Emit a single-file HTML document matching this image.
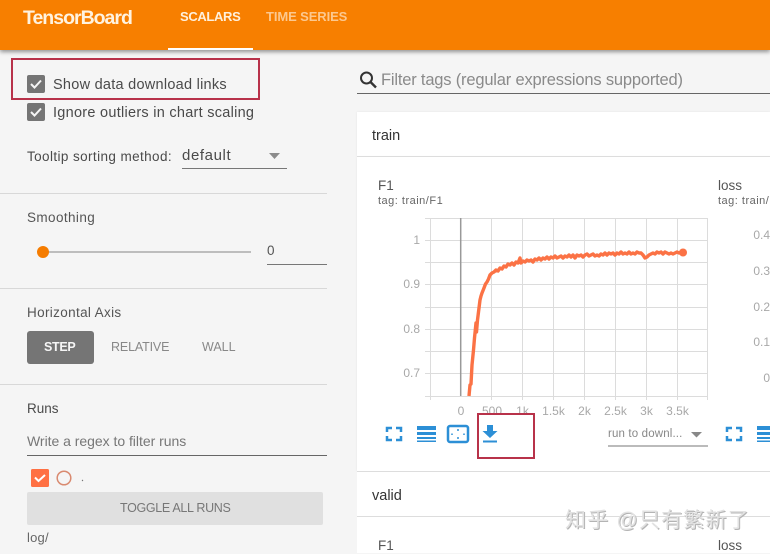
<!DOCTYPE html>
<html><head><meta charset="utf-8">
<style>
html,body{margin:0;padding:0}
body{width:770px;height:553px;overflow:hidden;background:#f5f5f5;position:relative;font-family:"Liberation Sans","Noto Sans CJK SC",sans-serif;color:#555}
.a{position:absolute;white-space:nowrap}
.l{position:absolute}
</style></head><body>
<div class="l" style="left:0;top:0;width:770px;height:50px;background:#f77f00;box-shadow:0 2px 4px rgba(0,0,0,.4)"></div>
<div class="a" style="left:23px;top:6px;font-size:19.500px;line-height:24px;font-weight:bold;color:#fff3e0;letter-spacing:-1px">TensorBoard</div>
<div class="a" style="left:180px;top:9px;font-size:13px;line-height:16px;font-weight:bold;color:#fff0dc;letter-spacing:-.35px">SCALARS</div>
<div class="a" style="left:266px;top:9px;font-size:13px;line-height:16px;font-weight:bold;color:#fcc88f;letter-spacing:-.1px">TIME SERIES</div>
<div class="l" style="left:168px;top:48px;width:85px;height:2px;background:#fff"></div>

<svg class="l" style="left:27px;top:74px" width="19" height="48" viewBox="0 0 19 48">
<rect width="18" height="18" y="1" rx="2" fill="#757575"/><path d="M4 10l3.500 3.500L14 6.500" fill="none" stroke="#f5f5f5" stroke-width="2"/>
<rect width="18" height="18" y="29" rx="2" fill="#757575"/><path d="M4 38l3.500 3.500L14 34.500" fill="none" stroke="#f5f5f5" stroke-width="2"/>
</svg>
<div class="a" style="left:53px;top:76px;font-size:14.500px;line-height:18px;color:#4a4a4a;letter-spacing:.26px">Show data download links</div>
<div class="a" style="left:53px;top:104px;font-size:14.500px;line-height:18px;color:#4a4a4a;letter-spacing:.27px">Ignore outliers in chart scaling</div>
<div class="a" style="left:27px;top:149px;font-size:13.500px;line-height:16px;color:#4a4a4a;letter-spacing:.4px">Tooltip sorting method:</div>
<div class="a" style="left:182px;top:147px;font-size:15px;line-height:18px;color:#4a4a4a;letter-spacing:.6px">default</div>
<svg class="l" style="left:269px;top:153px" width="12" height="7"><path d="M0 0h11L5.500 6z" fill="#8c8c8c"/></svg>
<div class="l" style="left:182px;top:168px;width:105px;height:1px;background:#777"></div>
<div class="l" style="left:0;top:193px;width:327px;height:1px;background:#d8d8d8"></div>

<div class="a" style="left:27px;top:210px;font-size:13.500px;line-height:16px;color:#555;letter-spacing:.4px">Smoothing</div>
<div class="l" style="left:43px;top:251px;width:208px;height:2px;background:#bdbdbd"></div>
<div class="l" style="left:37px;top:246px;width:12px;height:12px;border-radius:50%;background:#f57c00"></div>
<div class="a" style="left:267px;top:243px;font-size:13.500px;line-height:16px;color:#555">0</div>
<div class="l" style="left:267px;top:264px;width:60px;height:1px;background:#777"></div>
<div class="l" style="left:0;top:288px;width:327px;height:1px;background:#d8d8d8"></div>

<div class="a" style="left:27px;top:305px;font-size:13.500px;line-height:16px;color:#555;letter-spacing:.35px">Horizontal Axis</div>
<div class="l" style="left:27px;top:331px;width:67px;height:33px;border-radius:3px;background:#757575"></div>
<div class="a" style="left:44px;top:340px;font-size:12.500px;line-height:15px;font-weight:bold;color:#f5f5f5;letter-spacing:-.3px">STEP</div>
<div class="a" style="left:111px;top:340px;font-size:12.500px;line-height:15px;color:#888;letter-spacing:-.15px">RELATIVE</div>
<div class="a" style="left:202px;top:340px;font-size:12.500px;line-height:15px;color:#888;letter-spacing:0">WALL</div>
<div class="l" style="left:0;top:384px;width:327px;height:1px;background:#d8d8d8"></div>

<div class="a" style="left:27px;top:401px;font-size:13.500px;line-height:16px;color:#4a4a4a">Runs</div>
<div class="a" style="left:27px;top:433px;font-size:14px;line-height:17px;color:#777;letter-spacing:-.03px">Write a regex to filter runs</div>
<div class="l" style="left:27px;top:455px;width:300px;height:1px;background:#666"></div>
<svg class="l" style="left:31px;top:468px" width="60" height="20">
<rect x="0" y="1" width="18" height="18" rx="1.500" fill="#ff7043"/><path d="M4 9.500l3.500 3.500L14 7" fill="none" stroke="#fff" stroke-width="2"/>
<circle cx="33" cy="10" r="6.800" fill="none" stroke="#d98a70" stroke-width="1.500"/>
<circle cx="51.500" cy="12.500" r=".7" fill="#777"/>
</svg>
<div class="l" style="left:27px;top:492px;width:296px;height:33px;border-radius:2px;background:#e0e0e0"></div>
<div class="a" style="left:120px;top:501px;font-size:12.500px;line-height:15px;color:#777;letter-spacing:-.32px">TOGGLE ALL RUNS</div>
<div class="a" style="left:27px;top:530px;font-size:13px;line-height:16px;color:#666;letter-spacing:.2px">log/</div>

<svg class="l" style="left:358px;top:70px" width="20" height="20" viewBox="0 0 20 20"><circle cx="8.500" cy="8" r="5.500" fill="none" stroke="#333" stroke-width="2"/><path d="M12.500 12l5.500 5.500" stroke="#333" stroke-width="2.400"/></svg>
<div class="a" style="left:381px;top:70px;font-size:16.500px;line-height:20px;color:#8a8a8a;letter-spacing:-.19px">Filter tags (regular expressions supported)</div>
<div class="l" style="left:357px;top:93px;width:413px;height:1px;background:#666"></div>

<div class="l" style="left:357px;top:112px;width:413px;height:44px;background:#fff;box-shadow:0 0 2px rgba(0,0,0,.08)"></div>
<div class="a" style="left:372px;top:127px;font-size:14.500px;line-height:18px;color:#333">train</div>
<div class="l" style="left:357px;top:157px;width:413px;height:314px;background:#fff;box-shadow:0 0 2px rgba(0,0,0,.08)"></div>
<div class="l" style="left:357px;top:156px;width:413px;height:1px;background:#ddd"></div>
<div class="a" style="left:378px;top:178px;font-size:13.500px;line-height:16px;color:#555">F1</div>
<div class="a" style="left:378px;top:194px;font-size:11px;line-height:14px;color:#666;letter-spacing:.5px">tag: train/F1</div>
<div class="a" style="left:718px;top:178px;font-size:13.500px;line-height:16px;color:#555">loss</div>
<div class="a" style="left:718px;top:194px;font-size:11px;line-height:14px;color:#666;letter-spacing:.5px">tag: train/</div>

<svg class="l" style="left:370px;top:205px" width="400" height="250" viewBox="370 205 400 250" font-family="Liberation Sans" font-size="12" fill="#a8a8a8">
<g stroke="#dcdcdc" stroke-width="1" fill="none">
<path d="M430.500 218v182M491.500 218v182M522.500 218v182M553.500 218v182M584.500 218v182M615.500 218v182M646.500 218v182M677.500 218v182M707.500 218v182"/>
<path d="M425 218.500h283M425 240.500h283M425 262.500h283M425 284.500h283M425 307.500h283M425 329.500h283M425 351.500h283M425 373.500h283M425 396.500h283"/>
</g>
<path d="M460.700 218v178" stroke="#999" stroke-width="1.500"/>
<g text-anchor="end"><text x="420" y="244">1</text><text x="420" y="288">0.9</text><text x="420" y="333">0.8</text><text x="420" y="377">0.7</text></g>
<g text-anchor="middle"><text x="461" y="415">0</text><text x="492" y="415">500</text><text x="522.500" y="415">1k</text><text x="553.500" y="415">1.5k</text><text x="584.500" y="415">2k</text><text x="615.500" y="415">2.5k</text><text x="646.500" y="415">3k</text><text x="677.500" y="415">3.5k</text></g>
<path d="M469 396L470 385 471 384 472 365 473.500 350 474.500 338 476 323 476.500 332 477.500 320 478.500 312 480 300 481 296 482 293 484 288 485.500 284 487 282 488.500 279 490 275 492 273 494 272 496 270 498 271 500 268 502 269 504 266 506 267 508 264 510 265 512 263 514 265 516 262 518 263 520 258 521 263 523 261 525 262 527 260 529 261 531 260 533 262 535 259 537 260 539 258 541 260 543 258 545 259 547 257 549 259 551 257 553 258 555 256 557 258 559 257 561 256 563 258 565 256 567 257 569 255 571 257 573 255 575 258 577 255 579 256 581 255 583 257 585 255 587 254 589 256 591 255 593 254 595 256 597 255 599 256 601 254 603 255 605 253 607 255 609 253 611 254 613 253 615 255 617 253 619 254 621 252 623 254 625 253 627 254 629 252 631 254 633 253 635 254 637 252 639 253 641 253 643 255 645 258 647 257 649 255 651 254 653 253 655 254 657 252 659 253 661 252 663 254 665 252 667 253 669 254 671 253 673 254 675 253 677 252 679 253 681 252 683 252 686 252" fill="none" stroke="#fb7245" stroke-width="3.400" stroke-linejoin="round"/>
<circle cx="683" cy="252.500" r="4" fill="#fb7245"/>
<g text-anchor="end"><text x="770" y="239">0.4</text><text x="770" y="275">0.3</text><text x="770" y="311">0.2</text><text x="770" y="346">0.1</text><text x="770" y="382">0</text></g>
<g fill="none" stroke="#2c8fd6" stroke-width="2.500">
<path d="M392 428h-5v4M396 428h5v4M392 440h-5v-4M396 440h5v-4"/>
<path d="M732 428h-5v4M736 428h5v4M732 440h-5v-4M736 440h5v-4"/>
<rect x="448" y="426" width="20" height="16" rx="2"/>
</g>
<path d="M417 426h19v4h-19zM417 432h19v3h-19zM417 437h19v2h-19zM417 440.500h19v1.500h-19zM757 426h13v4h-13zM757 432h13v3h-13zM757 437h13v2h-13zM757 440.500h13v1.500h-13z" fill="#2c8fd6"/>
<path d="M457 430h2M457 438h2M452 433.500v1.500M464 433.500v1.500" stroke="#2c8fd6" stroke-width="1.500"/>
<path d="M487 425h6v6h4.500l-7.500 7-7.500-7H487zM483 440.500h14v2h-14z" fill="#2c8fd6"/>
<text x="608" y="437" font-size="11.500" fill="#888" letter-spacing=".15">run to downl...</text>
<path d="M691 432h11l-5.500 5.500z" fill="#888"/>
<path d="M608 446h100" stroke="#777" stroke-width="1"/>
</svg>

<div class="l" style="left:357px;top:471px;width:413px;height:1px;background:#ddd"></div>
<div class="l" style="left:357px;top:472px;width:413px;height:81px;background:#fff"></div>
<div class="a" style="left:372px;top:487px;font-size:14.500px;line-height:18px;color:#333">valid</div>
<div class="l" style="left:357px;top:516px;width:413px;height:1px;background:#ddd"></div>
<div class="a" style="left:378px;top:538px;font-size:13.500px;line-height:16px;color:#555">F1</div>
<div class="a" style="left:718px;top:538px;font-size:13.500px;line-height:16px;color:#555">loss</div>

<div class="a" style="left:565px;top:507px;font-size:21px;line-height:28px;letter-spacing:1.200px;color:#e2e2e2;text-shadow:1px 1px 0 #b4b4b4">知乎 @只有繁新了</div>

<div class="l" style="left:11px;top:58px;width:245px;height:38px;border:2px solid #b8324a"></div>
<div class="l" style="left:477px;top:413px;width:54px;height:42px;border:2px solid #b8324a"></div>
</body></html>
